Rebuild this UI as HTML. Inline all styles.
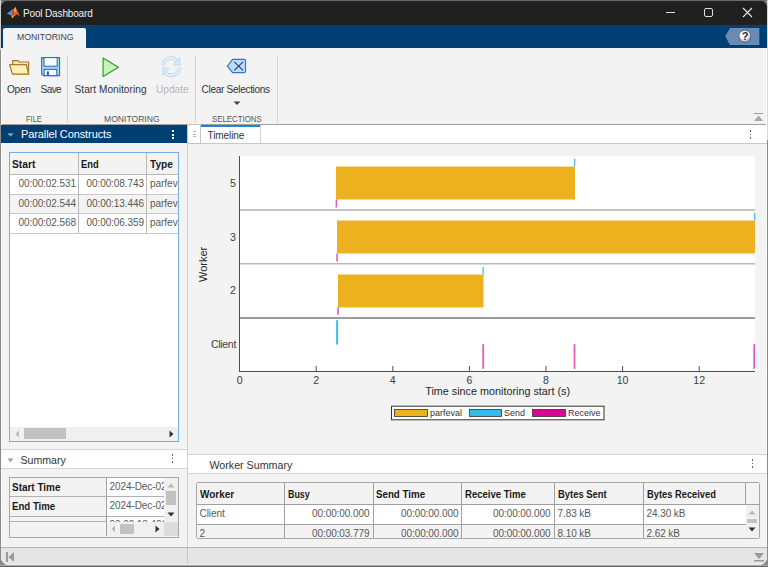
<!DOCTYPE html>
<html><head><meta charset="utf-8">
<style>
*{margin:0;padding:0;box-sizing:border-box}
html,body{width:768px;height:567px;overflow:hidden;background:#8a8a8a;font-family:"Liberation Sans",sans-serif}
.a{position:absolute}
.t{position:absolute;white-space:nowrap;line-height:1}
svg{position:absolute;overflow:visible}
.tb{font-size:10.1px;color:#333}
.gl{font-size:9.7px;color:#555;transform-origin:0 0}
.hd{font-weight:bold;font-size:10.6px;color:#1a1a1a;transform-origin:0 0}
.cel{font-size:10px;color:#585858;letter-spacing:-0.08px}
</style></head><body>
<!-- window clip -->
<div class="a" style="left:0;top:0;width:768px;height:1px;background:#6a6a6a"></div><div class="a" style="left:767px;top:0;width:1px;height:140px;background:#d4d8dc"></div><div class="a" style="left:0;top:0;width:1px;height:50px;background:#d0d0d0"></div><div class="a" style="left:0;top:565px;width:768px;height:1px;background:#a8a8a8"></div><div class="a" style="left:0;top:566px;width:768px;height:1px;background:#646464"></div>
<div class="a" style="left:1px;top:1px;width:766px;height:564px;border-radius:5px 5px 8px 8px;overflow:hidden;background:#f3f3f3">
<div class="a" style="left:-1px;top:-1px;width:768px;height:567px">

  <!-- ===== title bar ===== -->
  <div class="a" style="left:0;top:0;width:768px;height:25px;background:#202020"></div>
  <svg style="left:0;top:0" width="24" height="24" viewBox="0 0 24 24">
    <polygon points="6.8,13.4 10.5,11 14,8.2 12.4,12.6 10.6,15.2" fill="#3d9ae8"/>
    <polygon points="15.3,6.8 17.2,10.8 19.8,16 16.8,14.3 12.3,18.3 10.6,14.8 13.2,10.4" fill="#e0642a"/>
    <polygon points="15.3,6.8 16.4,10.6 14.6,13.2 14.2,9.4" fill="#f2b23a"/>
    <polygon points="12.3,18.3 11.4,16.2 13.2,16.6" fill="#f5d040"/>
    <polygon points="13.2,10.4 14.6,13.2 11.8,14.4" fill="#b8351c"/>
  </svg>
  <div class="t" style="left:23px;top:8.7px;font-size:10px;color:#f0f0f0;letter-spacing:-0.15px">Pool Dashboard</div>
  <div class="a" style="left:666px;top:12px;width:9px;height:1px;background:#ddd"></div>
  <div class="a" style="left:704px;top:8px;width:9px;height:9px;border:1px solid #ddd;border-radius:2px"></div>
  <svg style="left:742px;top:7px" width="11" height="11" viewBox="0 0 11 11"><path d="M1,1 L10,10 M10,1 L1,10" stroke="#e8e8e8" stroke-width="1.1"/></svg>

  <!-- ===== blue tab bar ===== -->
  <div class="a" style="left:0;top:25px;width:768px;height:23px;background:#003f73"></div>
  <div class="a" style="left:3px;top:28px;width:83px;height:20px;background:#f3f3f3;border-radius:2px 2px 0 0"></div>
  <div class="t" style="left:16.6px;top:32.4px;font-size:9.8px;color:#3a3f55;transform-origin:0 0;transform:scaleX(0.89)">MONITORING</div>
  <!-- help -->
  <svg style="left:724px;top:27px" width="36" height="19" viewBox="0 0 36 19">
    <defs><radialGradient id="hg" cx="0.4" cy="0.35" r="0.7"><stop offset="0" stop-color="#ffffff"/><stop offset="0.6" stop-color="#e8eaee"/><stop offset="1" stop-color="#a9b0bc"/></radialGradient></defs>
    <polygon points="1.2,9.3 6,1 35.3,1 35.3,17.9 6,17.9" fill="#6a8bb0"/>
    <circle cx="20.9" cy="9.3" r="6.2" fill="#2c3e58"/>
    <circle cx="20.9" cy="9.1" r="5.7" fill="url(#hg)"/>
    <text x="21" y="13.2" font-family="Liberation Sans" font-weight="bold" font-size="11" fill="#1e2c44" text-anchor="middle">?</text>
  </svg>

  <!-- ===== toolstrip ===== -->
  <div class="a" style="left:0;top:48px;width:768px;height:76px;background:#f3f3f3"></div>
  <div class="a" style="left:67px;top:55px;width:1px;height:68px;background:#d4d4d4"></div>
  <div class="a" style="left:195px;top:55px;width:1px;height:68px;background:#d4d4d4"></div>
  <div class="a" style="left:277px;top:55px;width:1px;height:68px;background:#d4d4d4"></div>

  <!-- folder icon -->
  <svg style="left:6px;top:54px" width="26" height="24" viewBox="0 0 26 24">
    <path d="M6.6,20 L6.6,6.6 L12.2,6.6 L13.6,8 L22.6,8 L22.6,20 Z" fill="#f8e4a8" stroke="#a67a30" stroke-width="1.2" stroke-linejoin="round"/>
    <path d="M3.6,10.6 L20.4,10.6 L22.6,20.2 L6.4,20.2 Z" fill="#fdefb6" stroke="#a67a30" stroke-width="1.2" stroke-linejoin="round"/>
  </svg>
  <!-- save icon -->
  <svg style="left:38px;top:54px" width="24" height="24" viewBox="0 0 24 24">
    <path d="M3.6,3.6 H21.6 V21.6 H5.2 L3.6,20 Z" fill="#a9d1f3" stroke="#2f70c2" stroke-width="1.1" stroke-linejoin="round"/>
    <rect x="6" y="3.6" width="13.2" height="8.6" fill="#fff" stroke="#2f70c2" stroke-width="1.1"/>
    <rect x="6.2" y="15.4" width="12.6" height="6.2" fill="#fff" stroke="#2f70c2" stroke-width="1.1"/>
    <rect x="8.9" y="17.4" width="2" height="3.8" fill="#1f5aa6"/>
  </svg>
  <div class="t tb" style="left:7px;top:84.7px;letter-spacing:-0.25px">Open</div>
  <div class="t tb" style="left:40.5px;top:84.7px;letter-spacing:-0.6px">Save</div>
  <div class="t gl" style="left:26.4px;top:113.9px;transform:scaleX(0.77)">FILE</div>

  <!-- play icon -->
  <svg style="left:98px;top:54px" width="26" height="26" viewBox="0 0 26 26">
    <polygon points="5.1,4 20.4,13.3 5.1,22.4" fill="#c6f5b8" stroke="#2f9e33" stroke-width="1.2" stroke-linejoin="round"/>
  </svg>
  <!-- update icon (disabled) -->
  <svg style="left:158px;top:54px" width="26" height="26" viewBox="0 0 26 26">
    <path d="M5,11.5 A8,8 0 0 1 19.5,7.5" fill="none" stroke="#b9d6f0" stroke-width="3.6"/>
    <path d="M5,11.5 A8,8 0 0 1 19.5,7.5" fill="none" stroke="#e6f2fc" stroke-width="1.8"/>
    <polygon points="15.5,10.8 21.8,3.8 22,11" fill="#d8eafa" stroke="#b9d6f0" stroke-width="0.9"/>
    <path d="M21.5,13.5 A8,8 0 0 1 7,18" fill="none" stroke="#b9d6f0" stroke-width="3.6"/>
    <path d="M21.5,13.5 A8,8 0 0 1 7,18" fill="none" stroke="#e6f2fc" stroke-width="1.8"/>
    <polygon points="10.8,14.5 5,21.5 5,13.5" fill="#d8eafa" stroke="#b9d6f0" stroke-width="0.9"/>
  </svg>
  <div class="t tb" style="left:74.5px;top:84.7px;letter-spacing:0.05px">Start Monitoring</div>
  <div class="t tb" style="left:156px;top:84.7px;color:#b8b8b8;letter-spacing:0px">Update</div>
  <div class="t gl" style="left:103.5px;top:113.9px;transform:scaleX(0.885)">MONITORING</div>

  <!-- clear icon -->
  <svg style="left:222px;top:54px" width="28" height="24" viewBox="0 0 28 24">
    <path d="M5.4,12.1 L10.6,5.4 H22.4 Q23.5,5.4 23.5,6.5 V17.5 Q23.5,18.6 22.4,18.6 H10.6 Z" fill="#bedcf7" stroke="#3977c6" stroke-width="1.2" stroke-linejoin="round"/>
    <path d="M12.3,7.8 L21,16.3 M21,7.8 L12.3,16.3" stroke="#1c3f70" stroke-width="1.1"/>
  </svg>
  <div class="t tb" style="left:201.6px;top:84.7px;letter-spacing:-0.33px">Clear Selections</div>
  <svg style="left:232.5px;top:100.5px" width="8" height="5" viewBox="0 0 8 5"><polygon points="0.5,0.5 7.5,0.5 4,4" fill="#444"/></svg>
  <div class="t gl" style="left:211.5px;top:113.9px;transform:scaleX(0.81)">SELECTIONS</div>

  <!-- collapse toolstrip icon -->
  <div class="a" style="left:754px;top:112.5px;width:8.5px;height:1.6px;background:#a0a0a0"></div>
  <svg style="left:754px;top:115px" width="9" height="7" viewBox="0 0 9 7"><polygon points="0,6 4.5,0.5 9,6" fill="#a8a8a8"/></svg>

  <div class="a" style="left:0;top:124px;width:768px;height:1px;background:#a0a0a0"></div>
  <div class="a" style="left:1px;top:48px;width:1px;height:500px;background:#fff"></div>
  <div class="a" style="left:766px;top:48px;width:1px;height:500px;background:#fff"></div>

  <!-- ===== left panel ===== -->
  <div class="a" style="left:0;top:125px;width:187px;height:18px;background:#003f73"></div>
  <svg style="left:7px;top:133px" width="8" height="5" viewBox="0 0 8 5"><polygon points="0.3,0.3 6.8,0.3 3.5,3.8" fill="#8a9cb0"/></svg>
  <div class="t" style="left:21px;top:129.1px;font-size:11px;color:#fff;letter-spacing:-0.1px">Parallel Constructs</div>
  <div class="a" style="left:171.5px;top:130px;width:2px;height:2px;background:#fff"></div>
  <div class="a" style="left:171.5px;top:133.5px;width:2px;height:2px;background:#fff"></div>
  <div class="a" style="left:171.5px;top:137px;width:2px;height:2px;background:#fff"></div>

  <!-- constructs table -->
  <div class="a" style="left:9px;top:152px;width:170px;height:290px;background:#fff;border:1px solid #72aee6"></div>
  <div class="a" style="left:10px;top:153px;width:168px;height:21px;background:#f3f3f3"></div>
  <div class="a" style="left:10px;top:174px;width:168px;height:1px;background:#b8b8b8"></div>
  <div class="a" style="left:10px;top:194px;width:168px;height:20px;background:#f3f3f3"></div>
  <div class="a" style="left:10px;top:194px;width:168px;height:1px;background:#c8c8c8"></div>
  <div class="a" style="left:10px;top:213px;width:168px;height:1px;background:#c8c8c8"></div>
  <div class="a" style="left:10px;top:233px;width:168px;height:1px;background:#c8c8c8"></div>
  <div class="a" style="left:78px;top:153px;width:1px;height:80px;background:#b8b8b8"></div>
  <div class="a" style="left:146.3px;top:153px;width:1px;height:80px;background:#b8b8b8"></div>
  <div class="t hd" style="left:12px;top:159.4px;transform:scaleX(0.965)">Start</div>
  <div class="t hd" style="left:81px;top:159.4px;transform:scaleX(0.88)">End</div>
  <div class="t hd" style="left:150px;top:159.4px;transform:scaleX(0.96)">Type</div>
  <div class="t cel" style="left:18.5px;top:178.6px">00:00:02.531</div>
  <div class="t cel" style="left:86.5px;top:178.6px">00:00:08.743</div>
  <div class="a" style="left:148px;top:174.6px;width:30px;height:16px;overflow:hidden"><div class="t cel" style="left:1.9px;top:4px;letter-spacing:0">parfeval</div></div>
  <div class="t cel" style="left:18.5px;top:198.5px">00:00:02.544</div>
  <div class="t cel" style="left:86.5px;top:198.5px">00:00:13.446</div>
  <div class="a" style="left:148px;top:194.5px;width:30px;height:16px;overflow:hidden"><div class="t cel" style="left:1.9px;top:4px;letter-spacing:0">parfeval</div></div>
  <div class="t cel" style="left:18.5px;top:217.6px">00:00:02.568</div>
  <div class="t cel" style="left:86.5px;top:217.6px">00:00:06.359</div>
  <div class="a" style="left:148px;top:213.6px;width:30px;height:16px;overflow:hidden"><div class="t cel" style="left:1.9px;top:4px;letter-spacing:0">parfeval</div></div>
  <!-- hscroll -->
  <div class="a" style="left:10px;top:427px;width:168px;height:14px;background:#f0f0f0"></div>
  <div class="a" style="left:23.5px;top:428px;width:42px;height:11px;background:#c2c2c2"></div>
  <svg style="left:15px;top:430px" width="5" height="8" viewBox="0 0 5 8"><polygon points="4,0.5 4,7.5 0.5,4" fill="#b8b8b8"/></svg>
  <svg style="left:169px;top:430px" width="5" height="8" viewBox="0 0 5 8"><polygon points="0.5,0.5 0.5,7.5 4.5,4" fill="#333"/></svg>

  <!-- summary header -->
  <div class="a" style="left:0;top:449px;width:187px;height:1px;background:#d6d6d6"></div>
  <div class="a" style="left:0;top:450px;width:187px;height:18px;background:#fff"></div>
  <div class="a" style="left:0;top:468px;width:187px;height:1px;background:#d6d6d6"></div>
  <svg style="left:7px;top:458px" width="8" height="5" viewBox="0 0 8 5"><polygon points="0.5,0.5 6.5,0.5 3.5,4" fill="#999"/></svg>
  <div class="t" style="left:20.5px;top:454.5px;font-size:10.6px;color:#333">Summary</div>
  <div class="a" style="left:171.5px;top:454px;width:1.8px;height:1.8px;background:#606060"></div>
  <div class="a" style="left:171.5px;top:457.5px;width:1.8px;height:1.8px;background:#606060"></div>
  <div class="a" style="left:171.5px;top:461px;width:1.8px;height:1.8px;background:#606060"></div>

  <!-- summary table -->
  <div class="a" style="left:9px;top:477px;width:170px;height:61px;background:#f3f3f3;border:1px solid #a8a8a8"></div>
  <div class="a" style="left:107px;top:478px;width:57px;height:44px;background:#fff"></div>
  <div class="a" style="left:10px;top:496px;width:154px;height:1px;background:#b0b0b0"></div>
  <div class="a" style="left:10px;top:516px;width:154px;height:1px;background:#b0b0b0"></div>
  <div class="a" style="left:10px;top:521px;width:97px;height:1px;background:#b0b0b0"></div>
  <div class="a" style="left:106px;top:478px;width:1px;height:58px;background:#a0a0a0"></div>
  <div class="t hd" style="left:12px;top:481.6px;transform:scaleX(0.94)">Start Time</div>
  <div class="t hd" style="left:12px;top:501.3px;transform:scaleX(0.91)">End Time</div>
  <div class="t cel" style="left:109.5px;top:481.5px">2024-Dec-02</div>
  <div class="t cel" style="left:109.5px;top:501.2px">2024-Dec-02</div>
  <div class="a" style="left:107px;top:516px;width:57px;height:6px;overflow:hidden"><div class="t cel" style="left:2.5px;top:3.5px">00:00:13.401</div></div>
  <div class="a" style="left:107px;top:522px;width:57px;height:14px;background:#f0f0f0"></div>
  <div class="a" style="left:120px;top:524px;width:14px;height:10px;background:#c2c2c2"></div>
  <svg style="left:111px;top:525px" width="5" height="8" viewBox="0 0 5 8"><polygon points="4,0.5 4,7.5 0.5,4" fill="#b8b8b8"/></svg>
  <svg style="left:155px;top:525px" width="5" height="8" viewBox="0 0 5 8"><polygon points="0.5,0.5 0.5,7.5 4.5,4" fill="#333"/></svg>
  <div class="a" style="left:164px;top:478px;width:14px;height:58px;background:#f0f0f0"></div>
  <div class="a" style="left:166px;top:491px;width:10px;height:14px;background:#c2c2c2"></div>
  <svg style="left:167px;top:483px" width="8" height="5" viewBox="0 0 8 5"><polygon points="0.5,4.5 7.5,4.5 4,0.5" fill="#b8b8b8"/></svg>
  <svg style="left:167px;top:512px" width="8" height="5" viewBox="0 0 8 5"><polygon points="0.5,0.5 7.5,0.5 4,4.5" fill="#333"/></svg>
  <div class="a" style="left:164px;top:522px;width:14px;height:14px;background:#dcdcdc"></div>

  <!-- splitter -->
  <div class="a" style="left:187px;top:124px;width:1px;height:423px;background:#d0d0d0"></div>

  <!-- ===== right panel: timeline ===== -->
  <div class="a" style="left:188px;top:125px;width:580px;height:18px;background:#fff"></div>
  <div class="a" style="left:188px;top:143px;width:580px;height:1px;background:#c8c8c8"></div>
  <div class="a" style="left:187px;top:124px;width:14px;height:20px;background:#fff;border:1px solid #c4c4c4"></div>
  <div class="a" style="left:193px;top:131px;width:3px;height:1px;background:#b4b4b4"></div>
  <div class="a" style="left:193px;top:133.5px;width:3px;height:1px;background:#b4b4b4"></div>
  <div class="a" style="left:193px;top:136px;width:3px;height:1px;background:#b4b4b4"></div>
  <div class="a" style="left:201px;top:124.6px;width:60px;height:2.2px;background:#2a7fd8"></div>
  <div class="a" style="left:260px;top:125px;width:1px;height:18px;background:#d0d0d0"></div>
  <div class="t" style="left:207.6px;top:131px;font-size:10px;color:#333;letter-spacing:-0.1px">Timeline</div>
  <div class="a" style="left:749.5px;top:130px;width:1.8px;height:1.8px;background:#606060"></div>
  <div class="a" style="left:749.5px;top:133.5px;width:1.8px;height:1.8px;background:#606060"></div>
  <div class="a" style="left:749.5px;top:137px;width:1.8px;height:1.8px;background:#606060"></div>

  <!-- plot -->
  <svg style="left:0;top:0" width="768" height="567" viewBox="0 0 768 567" id="plot">
    <rect x="240" y="156" width="515" height="215" fill="#fff"/>
    <rect x="240" y="209" width="515" height="2" fill="#c4c4c4"/>
    <rect x="240" y="263" width="515" height="1.5" fill="#b8b8b8"/>
    <rect x="240" y="317" width="515" height="2" fill="#9c9c9c"/>
    <!-- bars -->
    <rect x="336" y="166.5" width="239" height="33" fill="#edb120"/>
    <rect x="337" y="220.5" width="418" height="33" fill="#edb120"/>
    <rect x="338" y="274.5" width="145.5" height="33" fill="#edb120"/>
    <!-- send ticks -->
    <rect x="574" y="159" width="1.3" height="7.5" fill="#4dbeee"/>
    <rect x="754" y="213" width="1.3" height="7.5" fill="#4dbeee"/>
    <rect x="482.5" y="267" width="1.3" height="7.5" fill="#4dbeee"/>
    <rect x="336.1" y="320.2" width="2" height="24.3" fill="#3dbdf0"/>
    <!-- receive ticks -->
    <rect x="335.6" y="199.5" width="1.5" height="8" fill="#e055b5"/>
    <rect x="336.3" y="253.5" width="1.5" height="8" fill="#e055b5"/>
    <rect x="337.3" y="307.3" width="1.5" height="7.5" fill="#e055b5"/>
    <rect x="482.3" y="344.2" width="1.8" height="24.6" fill="#e35cb8"/>
    <rect x="573.6" y="344.2" width="1.8" height="24.6" fill="#e35cb8"/>
    <rect x="753.3" y="344.2" width="1.8" height="24.6" fill="#e35cb8"/>
    <!-- axes -->
    <rect x="239" y="156" width="1" height="216" fill="#4d4d4d"/>
    <rect x="239" y="371" width="516" height="1" fill="#4d4d4d"/>
    <g fill="#4d4d4d">
      <rect x="315.7" y="366" width="1" height="5"/>
      <rect x="392.3" y="366" width="1" height="5"/>
      <rect x="468.9" y="366" width="1" height="5"/>
      <rect x="545.5" y="366" width="1" height="5"/>
      <rect x="622.1" y="366" width="1" height="5"/>
      <rect x="698.7" y="366" width="1" height="5"/>
    </g>
    <g font-family="Liberation Sans" font-size="10.6" fill="#404040" text-anchor="middle">
      <text x="239.6" y="383.7">0</text>
      <text x="316.2" y="383.7">2</text>
      <text x="392.8" y="383.7">4</text>
      <text x="469.4" y="383.7">6</text>
      <text x="546.0" y="383.7">8</text>
      <text x="622.6" y="383.7">10</text>
      <text x="699.2" y="383.7">12</text>
    </g>
    <g font-family="Liberation Sans" font-size="10.6" fill="#404040" text-anchor="end">
      <text x="236" y="186.5">5</text>
      <text x="236" y="240.5">3</text>
      <text x="236" y="294.3">2</text>
      <text x="236" y="348.3" letter-spacing="-0.35">Client</text>
    </g>
    <text x="425.2" y="394.8" font-family="Liberation Sans" font-size="10.8" fill="#262626">Time since monitoring start (s)</text>
    <text transform="translate(207,282) rotate(-90)" font-family="Liberation Sans" font-size="11" fill="#262626">Worker</text>
    <!-- legend -->
    <rect x="391.5" y="406.2" width="212.5" height="13.6" fill="#fff" stroke="#333" stroke-width="1"/>
    <rect x="394.5" y="409.5" width="33" height="7" fill="#edb120" stroke="#333" stroke-width="0.8"/>
    <rect x="469.5" y="409.5" width="32" height="7" fill="#33bbee" stroke="#333" stroke-width="0.8"/>
    <rect x="532.5" y="409.5" width="33" height="7" fill="#dd0099" stroke="#333" stroke-width="0.8"/>
    <g font-family="Liberation Sans" font-size="9" fill="#333">
      <text x="430" y="415.8">parfeval</text>
      <text x="504" y="415.8">Send</text>
      <text x="568" y="415.8">Receive</text>
    </g>
  </svg>

  <!-- ===== worker summary ===== -->
  <div class="a" style="left:188px;top:454px;width:580px;height:1px;background:#d0d0d0"></div>
  <div class="a" style="left:188px;top:455px;width:580px;height:18px;background:#fff"></div>
  <div class="a" style="left:188px;top:473px;width:580px;height:1px;background:#d6d6d6"></div>
  <div class="t" style="left:209.4px;top:460.4px;font-size:10.7px;color:#333">Worker Summary</div>
  <div class="a" style="left:751.5px;top:459px;width:1.8px;height:1.8px;background:#606060"></div>
  <div class="a" style="left:751.5px;top:462.5px;width:1.8px;height:1.8px;background:#606060"></div>
  <div class="a" style="left:751.5px;top:466px;width:1.8px;height:1.8px;background:#606060"></div>

  <div class="a" style="left:196px;top:482px;width:564px;height:57px;background:#fff;border:1px solid #a8a8a8;border-radius:2px"></div>
  <div class="a" style="left:197px;top:483px;width:562px;height:21px;background:#f3f3f3"></div>
  <div class="a" style="left:197px;top:504px;width:562px;height:1px;background:#a0a0a0"></div>
  <div class="a" style="left:197px;top:524px;width:549px;height:1px;background:#a0a0a0"></div>
  <div class="a" style="left:197px;top:525px;width:549px;height:13px;background:#f3f3f3"></div>
  <div class="a" style="left:284px;top:483px;width:1px;height:55px;background:#a0a0a0"></div>
  <div class="a" style="left:373px;top:483px;width:1px;height:55px;background:#a0a0a0"></div>
  <div class="a" style="left:461px;top:483px;width:1px;height:55px;background:#a0a0a0"></div>
  <div class="a" style="left:554px;top:483px;width:1px;height:55px;background:#a0a0a0"></div>
  <div class="a" style="left:642.6px;top:483px;width:1px;height:55px;background:#a0a0a0"></div>
  <div class="a" style="left:745px;top:483px;width:1px;height:21px;background:#a0a0a0"></div>
  <div class="a" style="left:746px;top:505px;width:13px;height:33px;background:#f0f0f0"></div>
  <div class="a" style="left:746.5px;top:519px;width:10.5px;height:4px;background:#c2c2c2"></div>
  <svg style="left:748px;top:509.5px" width="8" height="5" viewBox="0 0 8 5"><polygon points="0.5,4.5 7.5,4.5 4,0.5" fill="#b8b8b8"/></svg>
  <svg style="left:748px;top:527px" width="8" height="5" viewBox="0 0 8 5"><polygon points="0.5,0.5 7.5,0.5 4,4.5" fill="#333"/></svg>

  <div class="t hd" style="left:199.5px;top:489.3px;transform:scaleX(0.94)">Worker</div>
  <div class="t hd" style="left:288px;top:489.3px;transform:scaleX(0.84)">Busy</div>
  <div class="t hd" style="left:376px;top:489.3px;transform:scaleX(0.92)">Send Time</div>
  <div class="t hd" style="left:464.5px;top:489.3px;transform:scaleX(0.9)">Receive Time</div>
  <div class="t hd" style="left:557.5px;top:489.3px;transform:scaleX(0.89)">Bytes Sent</div>
  <div class="t hd" style="left:646.5px;top:489.3px;transform:scaleX(0.88)">Bytes Received</div>
  <div class="t cel" style="left:199.5px;top:509.4px">Client</div>
  <div class="t cel" style="left:312px;top:509.4px">00:00:00.000</div>
  <div class="t cel" style="left:401px;top:509.4px">00:00:00.000</div>
  <div class="t cel" style="left:493px;top:509.4px">00:00:00.000</div>
  <div class="t cel" style="left:557.5px;top:509.4px">7.83 kB</div>
  <div class="t cel" style="left:646.5px;top:509.4px">24.30 kB</div>
  <div class="t cel" style="left:199.5px;top:529px">2</div>
  <div class="t cel" style="left:312px;top:529px">00:00:03.779</div>
  <div class="t cel" style="left:401px;top:529px">00:00:00.000</div>
  <div class="t cel" style="left:493px;top:529px">00:00:00.000</div>
  <div class="t cel" style="left:557.5px;top:529px">8.10 kB</div>
  <div class="t cel" style="left:646.5px;top:529px">2.62 kB</div>

  <!-- ===== status bar ===== -->
  <div class="a" style="left:1px;top:548px;width:1px;height:17px;background:#fff"></div>
  <div class="a" style="left:766px;top:548px;width:1px;height:17px;background:#fff"></div>
  <div class="a" style="left:0;top:547px;width:768px;height:1px;background:#b4b4b4"></div>
  <div class="a" style="left:0;top:548px;width:768px;height:19px;background:#e5e5e5"></div>
  <div class="a" style="left:0;top:564px;width:768px;height:1px;background:#f0f0f0"></div>
  <div class="a" style="left:187px;top:548px;width:1px;height:16px;background:#c8c8c8"></div>
  <div class="a" style="left:6px;top:552px;width:2px;height:10px;background:#9a9a9a"></div>
  <svg style="left:8px;top:552px" width="7" height="10" viewBox="0 0 7 10"><polygon points="6,0 6,10 0.5,5" fill="#9a9a9a"/></svg>
  <svg style="left:754px;top:553px" width="10" height="9" viewBox="0 0 10 9"><polygon points="0,0 10,0 5,6" fill="#9a9a9a"/><rect x="0" y="7" width="10" height="1.5" fill="#9a9a9a"/></svg>
</div>
</div>
</body></html>
